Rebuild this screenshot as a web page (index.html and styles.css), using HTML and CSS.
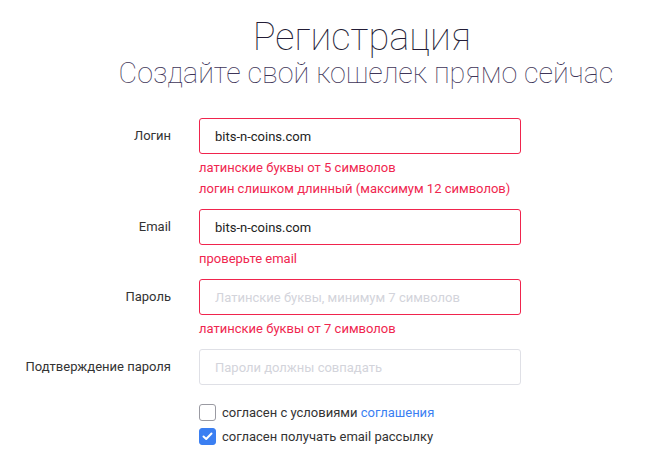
FILE: index.html
```html
<!DOCTYPE html>
<html lang="ru">
<head>
  <meta charset="UTF-8" />
  <meta name="viewport" content="width=device-width, initial-scale=1.0"/>
  <title>Регистрация</title>
  <link rel="stylesheet" href="styles.css">
</head>
<body>
  <div class="header">
    <h1 class="title">Регистрация</h1>
    <div class="subtitle">Создайте свой кошелек прямо сейчас</div>
  </div>

  <form class="form">
    <!-- Login -->
    <label class="label" for="login">Логин</label>
    <div class="field">
      <input id="login" class="input invalid" value="bits-n-coins.com"/>
      <div class="errors">
        <div>латинские буквы от 5 символов</div>
        <div>логин слишком длинный (максимум 12 символов)</div>
      </div>
    </div>

    <!-- Email -->
    <label class="label" for="email">Email</label>
    <div class="field">
      <input id="email" class="input invalid" value="bits-n-coins.com"/>
      <div class="errors">
        <div>проверьте email</div>
      </div>
    </div>

    <!-- Password -->
    <label class="label" for="pass">Пароль</label>
    <div class="field">
      <input id="pass" type="password" class="input invalid" placeholder="Латинские буквы, минимум 7 символов"/>
      <div class="errors">
        <div>латинские буквы от 7 символов</div>
      </div>
    </div>

    <!-- Confirm -->
    <label class="label" for="pass2">Подтверждение пароля</label>
    <div class="field">
      <input id="pass2" type="password" class="input" placeholder="Пароли должны совпадать"/>
    </div>

    <div></div>
    <div class="checks">
      <label class="check">
        <span class="box"></span>
        <span>согласен с условиями <a href="#" class="link">соглашения</a></span>
      </label>
      <label class="check">
        <span class="box checked">
          <svg width="11" height="9" viewBox="0 0 11 9"><path d="M1.5 4.5 L4.2 7 L9.5 1.5" fill="none" stroke="#fff" stroke-width="2" stroke-linecap="round" stroke-linejoin="round"/></svg>
        </span>
        <span>согласен получать email рассылку</span>
      </label>
    </div>
  </form>
</body>
</html>
```

FILE: styles.css
```css
body {
  margin: 0;
  font-family: Roboto, "Liberation Sans", sans-serif;
  background: #fff;
  color: #333;
}
.header {
  padding: 17px 0 0 60px;
  text-align: center;
}
.title {
  margin: 0;
  font-size: 38px;
  line-height: 40px;
  font-weight: 100;
  color: #231c36;
}
.subtitle {
  margin-top: -1px;
  padding-left: 8px;
  font-size: 28.7px;
  line-height: 34px;
  font-weight: 100;
  color: #3e3558;
}
.form {
  display: grid;
  grid-template-columns: 151px 322px;
  column-gap: 28px;
  row-gap: 10px;
  padding: 28px 0 0 20px;
}
.label {
  text-align: right;
  white-space: nowrap;
  font-size: 13px;
  line-height: 36px;
  color: #333;
}
.field {
  display: flex;
  flex-direction: column;
}
.input {
  height: 36px;
  box-sizing: border-box;
  border: 1px solid #dfe0e6;
  border-radius: 3px;
  padding: 0 15px;
  font-family: Roboto, "Liberation Sans", sans-serif;
  font-size: 13px;
  color: #222;
  outline: none;
}
.input.invalid {
  border-color: #f0244d;
}
.input::placeholder {
  color: #d3d4db;
}
.errors {
  margin-top: 3px;
  font-size: 13px;
  line-height: 21px;
  white-space: nowrap;
  color: #f0264f;
}
.checks {
  margin-top: 5px;
  display: flex;
  flex-direction: column;
}
.check {
  display: flex;
  align-items: center;
  gap: 6px;
  height: 24px;
  font-size: 13px;
  color: #333;
}
.box {
  width: 17px;
  height: 17px;
  box-sizing: border-box;
  border: 1px solid #9a9aa2;
  border-radius: 3px;
  display: flex;
  align-items: center;
  justify-content: center;
}
.box.checked {
  background: #3b7ff2;
  border-color: #3b7ff2;
}
.link {
  color: #3b7ff2;
  text-decoration: none;
}
```
